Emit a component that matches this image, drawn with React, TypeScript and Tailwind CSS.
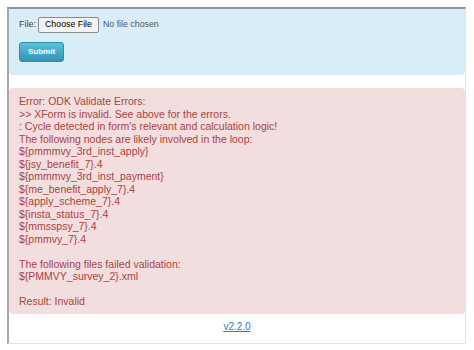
const nodes = [
  "${pmmmvy_3rd_inst_apply}",
  "${jsy_benefit_7}.4",
  "${pmmmvy_3rd_inst_payment}",
  "${me_benefit_apply_7}.4",
  "${apply_scheme_7}.4",
  "${insta_status_7}.4",
  "${mmsspsy_7}.4",
  "${pmmvy_7}.4",
];

export default function App() {
  return (
    <div className="h-[350px] w-[474px] bg-white pl-[7px] pt-[7px] font-['Liberation_Sans',Arial,sans-serif]">
      <div className="flex h-[337px] w-[459px] flex-col border-t-2 border-l-2 border-r border-b border-t-[#8f9396] border-l-[#a6a9ab] border-r-[#e3e3e3] border-b-[#e3e3e3]">
        <div className="flex h-[66px] flex-col gap-[9px] rounded-b-[4px] bg-[#d9edf7] pl-[10px] pt-[8px]">
          <div className="flex h-[16px] items-center text-[9px] text-[#444]">
            <span className="mr-[2px]">File:</span>
            <span className="flex h-[16px] items-center rounded-[2px] border border-[#8a8a8a] bg-[#f3f3f3] px-[6px] text-[8.8px] text-black">
              Choose File
            </span>
            <span className="ml-[4px] text-[8.8px] text-[#555]">No file chosen</span>
          </div>
          <div className="flex">
            <span className="flex h-[20px] items-center rounded-[3px] border border-[#2a8fb0] bg-gradient-to-b from-[#5bc0de] to-[#2f96b4] px-[8px] text-[8px] font-bold text-white">
              Submit
            </span>
          </div>
        </div>
        <div className="mt-[13px] h-[226px] rounded-[4px] bg-[#f2dede] px-[10px] py-[7px] text-[10.5px] leading-[12.5px] text-[#a94442]">
          <div>Error: ODK Validate Errors:</div>
          <div>&gt;&gt; XForm is invalid. See above for the errors.</div>
          <div>: Cycle detected in form's relevant and calculation logic!</div>
          <div>The following nodes are likely involved in the loop:</div>
          {nodes.map((n) => (
            <div key={n}>{n}</div>
          ))}
          <div className="h-[12.5px]" />
          <div>The following files failed validation:</div>
          <div>{"${PMMVY_survey_2}"}.xml</div>
          <div className="h-[12.5px]" />
          <div>Result: Invalid</div>
        </div>
        <div className="flex flex-1 items-center justify-center pb-[4px]">
          <a href="#" className="text-[10px] text-[#337ab7] underline">
            v2.2.0
          </a>
        </div>
      </div>
    </div>
  );
}
